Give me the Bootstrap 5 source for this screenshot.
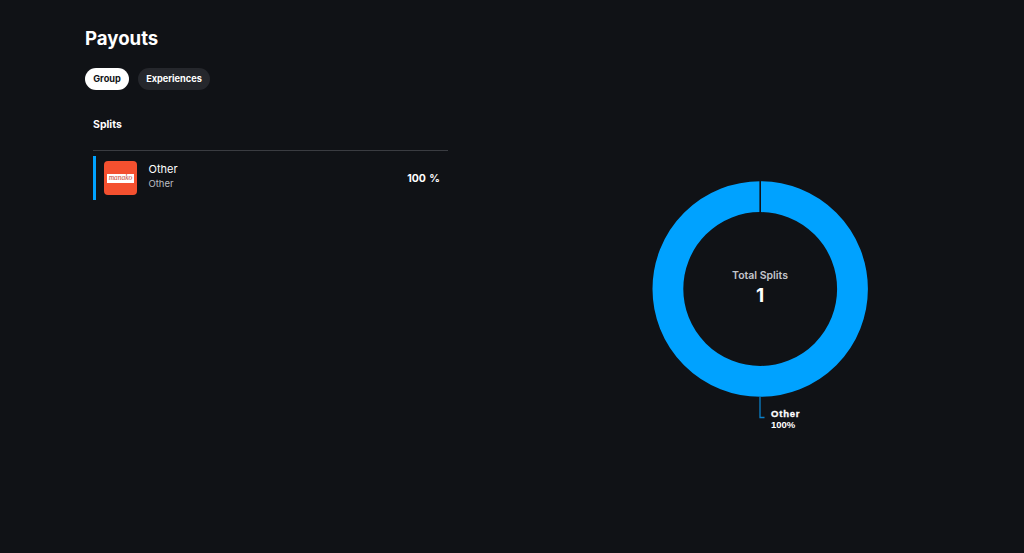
<!DOCTYPE html>
<html lang="en">
<head>
<meta charset="utf-8">
<title>Payouts</title>
<link href="https://cdn.jsdelivr.net/npm/bootstrap@5.3.0/dist/css/bootstrap.min.css" rel="stylesheet">
<style>
html, body { height: 100%; }
body { background: #101216; color: #fff; font-family: Inter, "Noto Sans", sans-serif; overflow: hidden; }
.page-wrap { padding: 26px 85px 0; }
.page-title { font-size: 18.6px; line-height: 24px; font-weight: 700; margin: 0 0 18px; }
.pill-btn { height: 22px; border-radius: 11px; border: 0; padding: 0 0 1px; font-size: 9.2px; line-height: 21px; font-weight: 700; text-align: center; }
.pill-on { background: #fff; color: #101216; width: 44px; }
.pill-on:hover { background: #fff; color: #101216; }
.pill-off { background: #25272c; color: #fff; width: 72px; }
.pill-off:hover { background: #25272c; color: #fff; }
.pill-row { gap: 9px; }
.left-col { width: 363px; padding-left: 8px; }
.splits-head { font-size: 10.5px; font-weight: 700; line-height: 14px; padding: 28px 0 18px; border-bottom: 1px solid #3a3c41; }
.split-row { margin-top: 5px; height: 44px; border-left: 3px solid #00a2ff; padding: 0 8px; gap: 8px; }
.brand-tile { width: 33px; height: 34px; background: #f4502f; border-radius: 4px; }
.brand-strip { width: 27px; height: 9px; background: #fff; color: #c4452e; font-family: "Liberation Serif", serif; font-style: italic; font-size: 7.5px; line-height: 8px; text-align: center; }
.split-text { padding-bottom: 3px; margin-left: 3.5px; }
.split-name { font-size: 11px; line-height: 14px; font-weight: 400; }
.split-sub { font-size: 9.5px; line-height: 15px; color: #bdbec2; }
.split-pct { font-size: 10.5px; font-weight: 700; word-spacing: 1px; padding-top: 2px; }
.right-col { width: 358px; }
.chart-box { width: 358px; height: 440px; }
.chart-box svg { display: block; width: 100%; height: 100%; }
.chart-center { position: absolute; left: 0; right: 0; top: 243px; text-align: center; }
.center-label { font-size: 10.5px; line-height: 14px; font-weight: 600; color: #c3c5cb; }
.center-value { font-size: 19px; line-height: 26px; font-weight: 700; }
.leg-a { font: 700 9.5px "Liberation Sans", sans-serif; letter-spacing: .8px; fill: #fff; stroke: #fff; stroke-width: .3; }
.leg-b { font: 700 9.5px "Liberation Sans", sans-serif; fill: #fff; }
</style>
</head>
<body>
<div class="page-wrap">
  <div class="d-flex justify-content-between align-items-start">
    <div>
      <h1 class="page-title">Payouts</h1>
      <div class="d-flex pill-row">
        <button type="button" class="btn pill-btn pill-on">Group</button>
        <button type="button" class="btn pill-btn pill-off">Experiences</button>
      </div>
      <div class="left-col">
        <div class="splits-head">Splits</div>
        <div class="d-flex align-items-center split-row">
          <div class="brand-tile d-flex align-items-center justify-content-center flex-shrink-0"><div class="brand-strip">manako</div></div>
          <div class="flex-grow-1 split-text">
            <div class="split-name">Other</div>
            <div class="split-sub">Other</div>
          </div>
          <div class="split-pct">100 %</div>
        </div>
      </div>
    </div>
    <div class="right-col">
      <div class="chart-box position-relative">
        <svg viewBox="0 0 358 440" aria-hidden="true">
          <circle cx="179.2" cy="263" r="92.3" fill="none" stroke="#00a2ff" stroke-width="30.8"/>
          <rect x="178.4" y="155" width="1.6" height="32" fill="#101216"/>
          <path d="M179 371V391.5H183.5" fill="none" stroke="#0a7fc8" stroke-width="1.3"/>
          <text x="190" y="390.5" class="leg-a">Other</text>
          <text x="190" y="402" class="leg-b">100%</text>
        </svg>
        <div class="chart-center">
          <div class="center-label">Total Splits</div>
          <div class="center-value">1</div>
        </div>
      </div>
    </div>
  </div>
</div>
<script src="https://cdn.jsdelivr.net/npm/bootstrap@5.3.0/dist/js/bootstrap.bundle.min.js"></script>
</body>
</html>
